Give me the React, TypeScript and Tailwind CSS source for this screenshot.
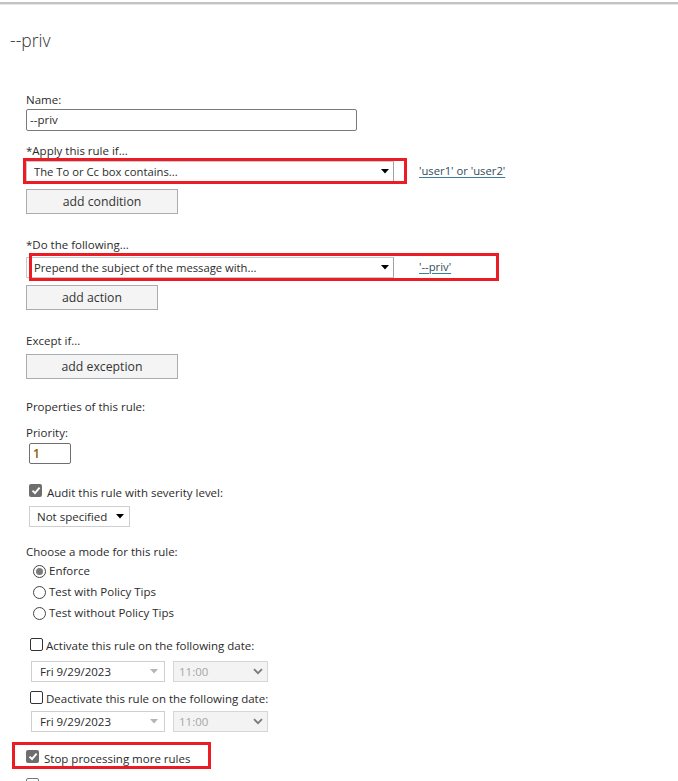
import React from "react";

function Caret({ color = "#000" }: { color?: string }) {
  return (
    <svg width="8" height="5" viewBox="0 0 8 5" className="shrink-0">
      <path d="M0 0 L8 0 L4 4.5 Z" fill={color} />
    </svg>
  );
}

function Chevron() {
  return (
    <svg width="10" height="7" viewBox="0 0 10 7" className="shrink-0">
      <path d="M1 1.2 L5 5.2 L9 1.2" fill="none" stroke="#7a7a7a" strokeWidth="1.8" />
    </svg>
  );
}

function CheckBox({ checked }: { checked?: boolean }) {
  if (checked) {
    return (
      <span className="flex h-[13px] w-[13px] shrink-0 items-center justify-center rounded-[2px] bg-[#6e6e6e]">
        <svg width="10" height="9" viewBox="0 0 10 9">
          <path d="M1.5 4.6 L4 7 L8.6 1.6" fill="none" stroke="#fff" strokeWidth="1.9" />
        </svg>
      </span>
    );
  }
  return <span className="block h-[13px] w-[13px] shrink-0 rounded-[2px] border border-[#333] bg-white" />;
}

function Radio({ checked }: { checked?: boolean }) {
  return (
    <span className="flex h-[13px] w-[13px] shrink-0 items-center justify-center rounded-full border border-[#444] bg-white">
      {checked && <span className="block h-[7px] w-[7px] rounded-full bg-[#7b7b7b]" />}
    </span>
  );
}

function Label({ children, mt }: { children: React.ReactNode; mt: string }) {
  return <div className={`h-[16px] text-[11.5px] leading-[16px] text-[#2b2b2b] ${mt}`}>{children}</div>;
}

function Button({ children, w, mt }: { children: React.ReactNode; w: string; mt: string }) {
  return (
    <div
      className={`flex h-[25px] items-center justify-center border border-[#a7aeb1] bg-[#f4f4f4] text-[12.25px] leading-[23px] text-[#333] ${w} ${mt}`}
    >
      {children}
    </div>
  );
}

export default function App() {
  return (
    <div className="relative h-[781px] w-[678px] overflow-hidden bg-white font-['Open_Sans',sans-serif] text-[#2b2b2b]">
      <div className="mt-[2px] h-[2px] bg-[#c3c3c3]" />
      <div className="h-px bg-[#e6e6e6]" />
      <div className="ml-[10px] mt-[23px] h-[24px] text-[17.5px] font-light leading-[24px] text-[#333]">--priv</div>

      <div className="pl-[26px]">
        <Label mt="mt-[40px]">Name:</Label>
        <div className="mt-[1px] flex h-[22px] w-[331px] items-center rounded-[2px] border border-[#7a7a7a] pl-[3px] text-[11.5px]">
          --priv
        </div>

        <Label mt="mt-[12px]">*Apply this rule if...</Label>
        <div className="relative mt-[2px] flex h-[21px] items-center">
          <div className="flex h-[21px] w-[368px] items-center border border-[#c8c8c8] border-r-[#a3a3a3] pl-[7px] pr-[4px] text-[11.25px] leading-[19px]">
            <span className="flex-1">The To or Cc box contains...</span>
            <Caret />
          </div>
          <span className="ml-[25px] text-[11.25px] text-[#2f4b5c] underline decoration-[#3d7d9c] underline-offset-2">
            'user1' or 'user2'
          </span>
          <div className="absolute left-[-3px] top-[-3px] h-[26px] w-[384px] border-[3px] border-[#ec1c24]" />
        </div>
        <Button w="w-[152px]" mt="mt-[7px]">add condition</Button>

        <Label mt="mt-[23px]">*Do the following...</Label>
        <div className="relative mt-[4px] flex h-[21px] items-center">
          <div className="flex h-[21px] w-[368px] items-center border border-[#c8c8c8] border-r-[#a3a3a3] pl-[7px] pr-[4px] text-[11.25px] leading-[19px]">
            <span className="flex-1">Prepend the subject of the message with...</span>
            <Caret />
          </div>
          <span className="ml-[25px] text-[11.25px] text-[#2f4b5c] underline decoration-[#3d7d9c] underline-offset-2">
            '--priv'
          </span>
          <div className="absolute left-[3px] top-[-4px] h-[28px] w-[470px] border-[3px] border-[#ec1c24]" />
        </div>
        <Button w="w-[132px]" mt="mt-[7px]">add action</Button>

        <Label mt="mt-[23px]">Except if...</Label>
        <Button w="w-[152px]" mt="mt-[5px]">add exception</Button>

        <Label mt="mt-[20px]">Properties of this rule:</Label>
        <Label mt="mt-[10px]">Priority:</Label>
        <div className="ml-[3px] mt-[2px] flex h-[21px] w-[42px] items-center rounded-[2px] border border-[#6f6f6f] pl-[3px] text-[12px] font-semibold text-[#8f5a00]">
          1
        </div>

        <div className="ml-[3px] mt-[20px] flex h-[16px] items-start">
          <CheckBox checked />
          <span className="ml-[5px] mt-[1px] text-[11.5px] leading-[16px]">Audit this rule with severity level:</span>
        </div>
        <div className="ml-[3px] mt-[6px] flex h-[21px] w-[101px] items-center border border-[#cfcfcf] pl-[7px] pr-[5px] text-[11.5px] leading-[19px]">
          <span className="flex-1">Not specified</span>
          <Caret />
        </div>

        <Label mt="mt-[17px]">Choose a mode for this rule:</Label>
        <div className="ml-[7px] mt-[3px]">
          {[
            { t: "Enforce", c: true },
            { t: "Test with Policy Tips", c: false },
            { t: "Test without Policy Tips", c: false },
          ].map((r) => (
            <div key={r.t} className="flex h-[21px] items-start">
              <span className="mt-[2px]">
                <Radio checked={r.c} />
              </span>
              <span className="ml-[3px] text-[11.5px] leading-[16px]">{r.t}</span>
            </div>
          ))}
        </div>

        <div className="ml-[4px] mt-[12px] flex h-[16px] items-start">
          <CheckBox />
          <span className="ml-[3px] text-[11.5px] leading-[16px]">Activate this rule on the following date:</span>
        </div>
        <div className="ml-[5px] mt-[7px] flex h-[21px] gap-[8px]">
          <div className="flex h-[21px] w-[134px] items-center border border-[#cfcfcf] pl-[8px] pr-[6px] text-[11.5px] leading-[19px]">
            <span className="flex-1">Fri 9/29/2023</span>
            <Caret color="#b5b5b5" />
          </div>
          <div className="flex h-[21px] w-[95px] items-center border border-[#d6d6d6] bg-[#f3f3f3] pl-[5px] pr-[4px] text-[11.5px] leading-[19px] text-[#a6a6a6]">
            <span className="flex-1">11:00</span>
            <Chevron />
          </div>
        </div>

        <div className="ml-[4px] mt-[9px] flex h-[16px] items-start">
          <CheckBox />
          <span className="ml-[3px] text-[11.5px] leading-[16px]">Deactivate this rule on the following date:</span>
        </div>
        <div className="ml-[5px] mt-[4px] flex h-[21px] gap-[8px]">
          <div className="flex h-[21px] w-[134px] items-center border border-[#cfcfcf] pl-[8px] pr-[6px] text-[11.5px] leading-[19px]">
            <span className="flex-1">Fri 9/29/2023</span>
            <Caret color="#b5b5b5" />
          </div>
          <div className="flex h-[21px] w-[95px] items-center border border-[#d6d6d6] bg-[#f3f3f3] pl-[5px] pr-[4px] text-[11.5px] leading-[19px] text-[#a6a6a6]">
            <span className="flex-1">11:00</span>
            <Chevron />
          </div>
        </div>

        <div className="relative mt-[18px] flex h-[16px] items-start">
          <CheckBox checked />
          <span className="ml-[5px] mt-[1px] text-[11.5px] leading-[16px]">Stop processing more rules</span>
          <div className="absolute left-[-14px] top-[-8px] h-[27px] w-[199px] border-[3px] border-[#ec1c24]" />
        </div>
        <div className="mt-[12px] flex h-[16px] items-start">
          <span className="block h-[13px] w-[13px] rounded-[2px] border border-[#777] bg-white" />
        </div>
      </div>
    </div>
  );
}
